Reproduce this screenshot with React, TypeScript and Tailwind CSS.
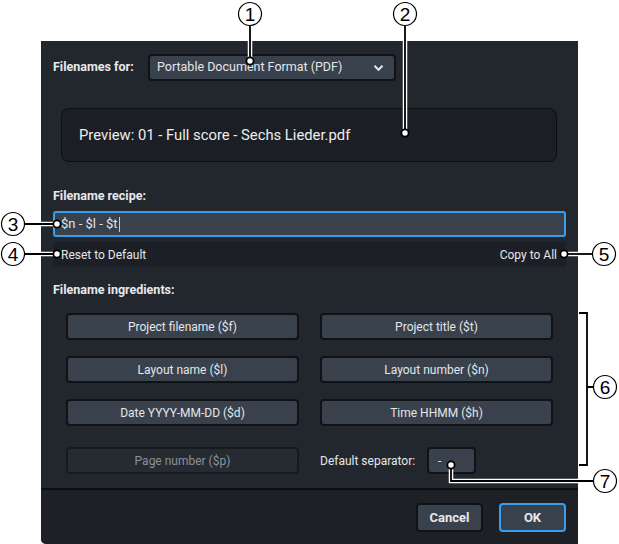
import React from 'react'

const FONT = { fontFamily: 'Roboto, "Noto Sans", sans-serif' }

const INGREDIENTS: { left: string; right: string }[] = [
  { left: 'Project filename ($f)', right: 'Project title ($t)' },
  { left: 'Layout name ($l)', right: 'Layout number ($n)' },
  { left: 'Date YYYY-MM-DD ($d)', right: 'Time HHMM ($h)' },
]

function IngredientButton({ label, disabled }: { label: string; disabled?: boolean }) {
  return (
    <button
      className={`h-[27px] w-[233px] rounded-[4px] border-2 text-[12px] ${
        disabled
          ? 'border-[#16191d] bg-[#262b32] text-[#8c9198]'
          : 'border-[#101215] bg-[#38414c] text-[#e4e6e8]'
      }`}
    >
      {label}
    </button>
  )
}

// Callout markers drawn over the dialog
function Callouts() {
  const circles: { n: string; x: number; y: number }[] = [
    { n: '1', x: 250, y: 14 },
    { n: '2', x: 405, y: 14 },
    { n: '3', x: 13, y: 224 },
    { n: '4', x: 13, y: 254 },
    { n: '5', x: 604, y: 254 },
    { n: '6', x: 605, y: 387 },
    { n: '7', x: 605, y: 481 },
  ]
  const lines = [
    'M250 26 V61',
    'M405 26 V133',
    'M1 224 H57',
    'M1 254 H57',
    'M592 254 H564',
    'M579 313 H587 V465 H579 M587 387 H593',
    'M451 465 V481 H593',
  ]
  const dots = [
    [250, 61],
    [405, 133],
    [57, 224],
    [57, 254],
    [564, 254],
    [451, 465],
  ]
  return (
    <svg className="absolute inset-0 pointer-events-none" width={619} height={544}>
      {lines.map((d, i) => (
        <path key={'w' + i} d={d} stroke="#fff" strokeWidth={4.5} fill="none" />
      ))}
      {lines.map((d, i) => (
        <path key={'b' + i} d={d} stroke="#000" strokeWidth={1.8} fill="none" />
      ))}
      {dots.map(([x, y], i) => (
        <circle key={'d' + i} cx={x} cy={y} r={3.6} fill="#fff" stroke="#000" strokeWidth={1.8} />
      ))}
      {circles.map(c => (
        <g key={c.n}>
          <circle cx={c.x} cy={c.y} r={11.5} fill="#fff" stroke="#000" strokeWidth={1.2} />
          <text
            x={c.x}
            y={c.y + 6.5}
            textAnchor="middle"
            fontSize={19}
            fontFamily='"Liberation Sans", Arial, sans-serif'
            fill="#000"
          >
            {c.n}
          </text>
        </g>
      ))}
    </svg>
  )
}

export default function App() {
  return (
    <div className="relative w-[619px] h-[544px] bg-white overflow-hidden" style={FONT}>
      <div className="pl-[41px] pt-[41px]">
        <div className="w-[537px] h-[503px] bg-[#22272e] rounded-bl-[5px] flex flex-col overflow-hidden">
          <div className="flex-1 px-[12px] pt-[13px]">
            {/* Filenames for */}
            <div className="flex items-center h-[27px]">
              <span className="w-[95px] text-[12.5px] font-bold text-[#e8e9ea]">Filenames for:</span>
              <div className="flex items-center justify-between w-[248px] h-[27px] rounded-[4px] border-2 border-[#101215] bg-[#38414c] pl-[7px] pr-[10px]">
                <span className="text-[12.5px] text-[#e4e6e8]">Portable Document Format (PDF)</span>
                <svg width="11" height="8" viewBox="0 0 11 8">
                  <path d="M1.5 1.8 L5.5 5.8 L9.5 1.8" stroke="#e4e6e8" strokeWidth="2" fill="none" />
                </svg>
              </div>
            </div>

            {/* Preview */}
            <div className="mt-[27px] ml-[8px] w-[496px] h-[54px] rounded-[8px] border border-[#0c0e10] bg-[#1b1f25] flex items-center pl-[17px]">
              <span className="text-[14.8px] text-[#eceded]">Preview: 01 - Full score - Sechs Lieder.pdf</span>
            </div>

            {/* Recipe */}
            <div className="mt-[25px] text-[12.5px] font-bold text-[#e8e9ea] leading-[17px]">Filename recipe:</div>
            <div className="mt-[7px] w-[513px] h-[26px] rounded-[3px] border-2 border-[#3b9eed] bg-[#38414c] flex items-center pl-[6px]">
              <span className="text-[13px] text-[#e4e6e8]">$n - $l - $t</span>
              <span className="ml-[1px] w-px h-[15px] bg-[#c8cacc]" />
            </div>
            <div className="mt-[5px] w-[513px] h-[25px] rounded-[3px] bg-[#1c2026] flex items-center justify-between pl-[8px] pr-[9px]">
              <span className="text-[12px] text-[#e4e6e8]">Reset to Default</span>
              <span className="text-[12px] text-[#e4e6e8]">Copy to All</span>
            </div>

            {/* Ingredients */}
            <div className="mt-[14px] text-[12.5px] font-bold text-[#e8e9ea] leading-[17px]">Filename ingredients:</div>
            <div className="mt-[15px] ml-[13px] flex flex-col gap-[16px]">
              {INGREDIENTS.map(row => (
                <div key={row.left} className="flex gap-[21px]">
                  <IngredientButton label={row.left} />
                  <IngredientButton label={row.right} />
                </div>
              ))}
            </div>
            <div className="mt-[21px] ml-[13px] flex gap-[21px] items-center">
              <IngredientButton label="Page number ($p)" disabled />
              <div className="flex items-center">
                <span className="w-[107px] whitespace-nowrap text-[12px] text-[#e4e6e8]">Default separator:</span>
                <div className="w-[49px] h-[27px] rounded-[4px] border-2 border-[#101215] bg-[#38414c] flex items-center pl-[9px]">
                  <span className="text-[12px] text-[#e4e6e8]">-</span>
                </div>
              </div>
            </div>
          </div>

          {/* Footer */}
          <div className="h-[56px] border-t-2 border-[#0c0e10] bg-[#1d2126] flex items-start justify-end gap-[16px] pt-[13px] pr-[12px]">
            <button className="w-[67px] h-[29px] rounded-[4px] border-2 border-[#101215] bg-[#38414c] text-[13px] font-bold text-[#e8e9ea]">
              Cancel
            </button>
            <button className="w-[67px] h-[29px] rounded-[4px] border-2 border-[#3b9eed] bg-[#38414c] text-[13px] font-bold text-[#e8e9ea]">
              OK
            </button>
          </div>
        </div>
      </div>
      <Callouts />
    </div>
  )
}
